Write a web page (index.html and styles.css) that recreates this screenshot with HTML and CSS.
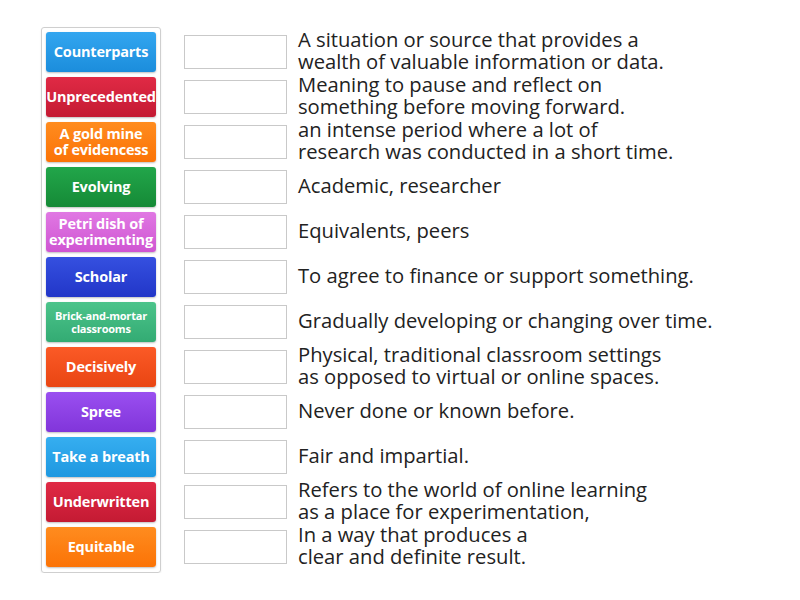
FILE: index.html
```html
<!DOCTYPE html>
<html>
<head>
<meta charset="utf-8">
<link rel="stylesheet" href="styles.css">
</head>
<body>
<div class="page">
  <div class="bank">
    <div class="tile c-blue">Counterparts</div>
    <div class="tile c-red">Unprecedented</div>
    <div class="tile c-orange">A gold mine<br>of evidencess</div>
    <div class="tile c-green">Evolving</div>
    <div class="tile c-pink">Petri dish of<br>experimenting</div>
    <div class="tile c-navy">Scholar</div>
    <div class="tile c-teal small">Brick-and-mortar<br>classrooms</div>
    <div class="tile c-tomato">Decisively</div>
    <div class="tile c-purple">Spree</div>
    <div class="tile c-sky">Take a breath</div>
    <div class="tile c-red">Underwritten</div>
    <div class="tile c-orange">Equitable</div>
  </div>
  <div class="slots">
    <div class="slot"></div><div class="slot"></div><div class="slot"></div><div class="slot"></div>
    <div class="slot"></div><div class="slot"></div><div class="slot"></div><div class="slot"></div>
    <div class="slot"></div><div class="slot"></div><div class="slot"></div><div class="slot"></div>
  </div>
  <div class="defs">
    <div class="def">A situation or source that provides a<br>wealth of valuable information or data.</div>
    <div class="def">Meaning to pause and reflect on<br>something before moving forward.</div>
    <div class="def">an intense period where a lot of<br>research was conducted in a short time.</div>
    <div class="def">Academic, researcher</div>
    <div class="def">Equivalents, peers</div>
    <div class="def">To agree to finance or support something.</div>
    <div class="def">Gradually developing or changing over time.</div>
    <div class="def">Physical, traditional classroom settings<br>as opposed to virtual or online spaces.</div>
    <div class="def">Never done or known before.</div>
    <div class="def">Fair and impartial.</div>
    <div class="def">Refers to the world of online learning<br>as a place for experimentation,</div>
    <div class="def">In a way that produces a<br>clear and definite result.</div>
  </div>
</div>
</body>
</html>
```
FILE: styles.css
```css
html, body {
  margin: 0;
  padding: 0;
  background: #ffffff;
}
body {
  font-family: "Open Sans", "Liberation Sans", sans-serif;
  color: #222222;
}
.page {
  display: flex;
  align-items: flex-start;
  padding: 27px 0 0 41px;
}
.bank {
  width: 110px;
  padding: 4px 4px 5px 4px;
  border: 1px solid #cfcfcf;
  border-radius: 3px;
  display: flex;
  flex-direction: column;
  gap: 5px;
  box-shadow: 0 1px 2px rgba(0,0,0,0.08);
}
.tile {
  height: 40px;
  border-radius: 3px;
  display: flex;
  align-items: center;
  justify-content: center;
  text-align: center;
  color: #ffffff;
  font-weight: 700;
  font-size: 14.5px;
  line-height: 16px;
  box-shadow: 0 1px 2px rgba(0,0,0,0.25);
  letter-spacing: -0.2px;
}
.tile.small {
  font-size: 11px;
  line-height: 13px;
}
.c-blue { background: linear-gradient(#33a6f0, #1b8ddc); }
.c-red { background: linear-gradient(#e02a45, #c41a33); }
.c-orange { background: linear-gradient(#ff8c1f, #fb7306); }
.c-green { background: linear-gradient(#22a64a, #158a36); }
.c-pink { background: linear-gradient(#e078e3, #cf55d2); }
.c-navy { background: linear-gradient(#3550e0, #2236c8); }
.c-teal { background: linear-gradient(#4cc48b, #33ab73); }
.c-tomato { background: linear-gradient(#fb5a26, #e94512); }
.c-purple { background: linear-gradient(#9a4ff0, #8135da); }
.c-sky { background: linear-gradient(#36aef0, #1e98e0); }
.slots {
  margin-left: 23px;
  padding-top: 8px;
  display: flex;
  flex-direction: column;
  gap: 11px;
}
.slot {
  width: 101px;
  height: 32px;
  border: 1px solid #c9c9c9;
  background: #ffffff;
}
.defs {
  margin-left: 11px;
  padding-top: 0;
  display: flex;
  flex-direction: column;
}
.def {
  height: 45px;
  display: flex;
  align-items: center;
  font-size: 20.2px;
  line-height: 22px;
  white-space: nowrap;
}
```
